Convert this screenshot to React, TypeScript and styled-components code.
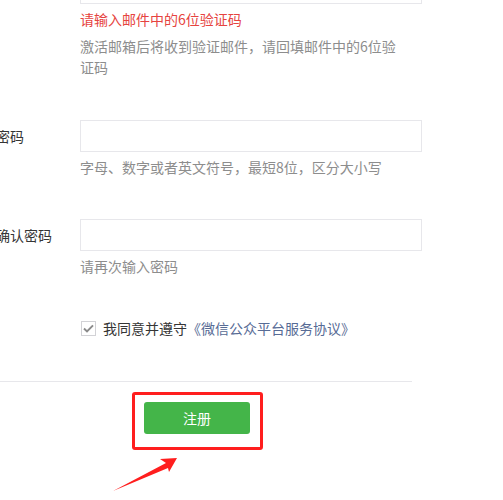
import React from "react";
import styled, { createGlobalStyle } from "styled-components";

const Global = createGlobalStyle`
  html, body { margin: 0; padding: 0; background: #fff; }
  body {
    font-family: "Noto Sans CJK SC", "Liberation Sans", sans-serif;
    font-size: 14px;
    color: #353535;
    overflow: hidden;
  }
`;

const Page = styled.div`
  position: relative;
  width: 503px;
  height: 500px;
  overflow: hidden;
`;

const Form = styled.div`
  margin-left: -4px;
  padding-top: 1px;
  margin-top: -29px;
  display: flex;
  flex-direction: column;
`;

const Row = styled.div<{ $gap?: number }>`
  display: grid;
  grid-template-columns: 84px 342px;
  margin-top: ${(p) => p.$gap ?? 0}px;
`;

const Label = styled.div`
  font-size: 14px;
  line-height: 32px;
  color: #353535;
  white-space: nowrap;
`;

const Field = styled.div`
  display: flex;
  flex-direction: column;
`;

const Input = styled.input`
  box-sizing: border-box;
  width: 342px;
  height: 32px;
  border: 1px solid #e7e7eb;
  border-radius: 0;
  margin: 0;
  padding: 0 10px;
  outline: none;
  font: inherit;
`;

const Hint = styled.div<{ $warn?: boolean; $gap?: number }>`
  margin-top: ${(p) => p.$gap ?? 5}px;
  width: 328px;
  font-size: 14px;
  line-height: 21px;
  color: ${(p) => (p.$warn ? "#e64340" : "#8d8d8d")};
`;

const AgreeRow = styled.div`
  display: flex;
  align-items: center;
  margin-top: 40px;
  margin-left: 85px;
  height: 22px;
  gap: 7px;
`;

const CheckBox = styled.span`
  box-sizing: border-box;
  width: 15px;
  height: 15px;
  border: 1px solid #d2d2d6;
  display: flex;
  align-items: center;
  justify-content: center;
  background: #fff;
`;

const AgreeText = styled.span`
  font-size: 14px;
  line-height: 22px;
  color: #353535;
`;

const Link = styled.a`
  color: #576b95;
  text-decoration: none;
`;

const Divider = styled.div`
  margin-top: 42px;
  width: 416px;
  height: 1px;
  background: #e7e7eb;
`;

const Footer = styled.div`
  display: flex;
  padding-left: 136px;
  margin-top: 10px;
`;

const Frame = styled.div`
  box-sizing: border-box;
  width: 131px;
  height: 58px;
  border: 3px solid #ff1e1e;
  border-radius: 3px;
  padding: 7px 0 0 9px;
`;

const SubmitButton = styled.button`
  box-sizing: border-box;
  width: 106px;
  height: 32px;
  border: none;
  border-radius: 3px;
  background: #44b549;
  color: #fff;
  font-family: "Noto Sans CJK SC", sans-serif;
  font-size: 14px;
  line-height: 32px;
  padding: 0;
  display: block;
`;

const Arrow = styled.svg`
  position: absolute;
  left: 108px;
  top: 452px;
`;

export default function App() {
  return (
    <Page>
      <Global />
      <Form>
        <Row>
          <Label />
          <Field>
            <Input />
            <Hint $warn $gap={5}>请输入邮件中的6位验证码</Hint>
            <Hint $gap={6}>激活邮箱后将收到验证邮件，请回填邮件中的6位验证码</Hint>
          </Field>
        </Row>
        <Row $gap={42}>
          <Label>密码</Label>
          <Field>
            <Input type="password" />
            <Hint>字母、数字或者英文符号，最短8位，区分大小写</Hint>
          </Field>
        </Row>
        <Row $gap={41}>
          <Label>确认密码</Label>
          <Field>
            <Input type="password" />
            <Hint>请再次输入密码</Hint>
          </Field>
        </Row>
        <AgreeRow>
          <CheckBox>
            <svg width="11" height="9" viewBox="0 0 11 9">
              <path d="M1 4.6 L4 7.4 L10 1.4" fill="none" stroke="#8a8a8a" strokeWidth="2" />
            </svg>
          </CheckBox>
          <AgreeText>
            我同意并遵守<Link>《微信公众平台服务协议》</Link>
          </AgreeText>
        </AgreeRow>
        <Divider />
        <Footer>
          <Frame>
            <SubmitButton>注册</SubmitButton>
          </Frame>
        </Footer>
      </Form>
      <Arrow width="80" height="48" viewBox="0 0 80 48">
        <polygon points="69,6 52,7 58,11 5,39 60,16 61,20" fill="#ff1e1e" />
      </Arrow>
    </Page>
  );
}
